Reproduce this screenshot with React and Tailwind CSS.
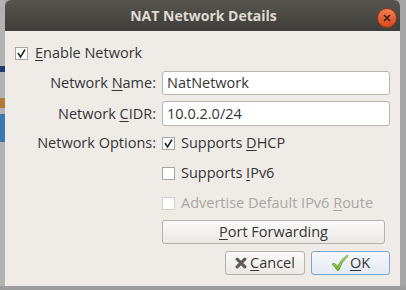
import React from "react";

const font = { fontFamily: '"Open Sans", "Noto Sans", sans-serif' };

const U = ({ children }) => <span className="underline underline-offset-2 decoration-1">{children}</span>;

const Check = ({ checked, disabled }) => (
  <div
    className={`w-[13px] h-[13px] shrink-0 border bg-white flex items-center justify-center ${
      disabled ? "border-[#d2d0cc] bg-[#f3f2f0]" : "border-[#a9a6a1]"
    }`}
  >
    {checked && (
      <svg width="11" height="11" viewBox="0 0 11 11">
        <path d="M2 5 L4.5 9 L9 1.5" fill="none" stroke="#2b2b2b" strokeWidth="1.6" />
      </svg>
    )}
  </div>
);

const Label = ({ children }) => (
  <div className="w-[142px] shrink-0 text-right pr-[1px]">{children}</div>
);

export default function App() {
  return (
    <div className="w-[406px] h-[290px] bg-[#a3a3a3] overflow-hidden flex flex-col text-[#353535]" style={font}>
      <div className="flex h-[286px]">
        {/* bits of the window behind */}
        <div className="w-[5px] shrink-0 flex flex-col bg-[#b3b3b3]">
          <div className="h-[66px]" />
          <div className="h-[6px] bg-[#1f3a6b]" />
          <div className="h-[26px]" />
          <div className="h-[10px] bg-[#b07a3a]" />
          <div className="h-[6px]" />
          <div className="h-[28px] bg-[#3a78b0]" />
        </div>

        <div className="w-[395px] shrink-0 flex flex-col">
          {/* title bar */}
          <div className="h-[31px] rounded-t-[6px] bg-gradient-to-b from-[#57554f] to-[#3f3e3a] flex items-center relative">
            <div className="flex-1 text-center text-[14px] font-bold text-[#dfdbd2] pl-[2px]">NAT Network Details</div>
            <div className="absolute right-[3px] top-[8px] w-[20px] h-[20px] rounded-full bg-gradient-to-b from-[#f27c4d] to-[#d9461a] border border-[#8a3a1c] flex items-center justify-center">
              <svg width="8" height="8" viewBox="0 0 8 8">
                <path d="M1 1 L7 7 M7 1 L1 7" stroke="#3a1a0e" strokeWidth="1.6" />
              </svg>
            </div>
          </div>

          {/* body */}
          <div className="flex-1 bg-[#efece8] pl-[10px] pr-[10px] pt-[12px] text-[14.5px]">
            <div className="h-[20px] flex items-center gap-[7px]">
              <Check checked />
              <span><U>E</U>nable Network</span>
            </div>

            <div className="mt-[8px] flex items-center gap-[5px]">
              <Label>Network <U>N</U>ame:</Label>
              <div className="w-[228px] h-[24px] bg-white border border-[#b9b5ae] rounded-[3px] flex items-center px-[4px]">
                NatNetwork
              </div>
            </div>

            <div className="mt-[6px] flex items-center gap-[5px]">
              <Label>Network <U>C</U>IDR:</Label>
              <div className="w-[228px] h-[25px] bg-white border border-[#b9b5ae] rounded-[3px] flex items-center px-[4px]">
                10.0.2.0/24
              </div>
            </div>

            <div className="mt-[2px] h-[30px] flex items-center gap-[5px]">
              <Label>Network Options:</Label>
              <div className="flex items-center gap-[6px]">
                <Check checked />
                <span>Supports <U>D</U>HCP</span>
              </div>
            </div>

            <div className="h-[30px] flex items-center gap-[5px]">
              <Label />
              <div className="flex items-center gap-[6px]">
                <Check />
                <span>Supports <U>I</U>Pv6</span>
              </div>
            </div>

            <div className="h-[30px] flex items-center gap-[5px]">
              <Label />
              <div className="flex items-center gap-[6px] text-[#a9a7a3]">
                <Check disabled />
                <span>Advertise Default IPv6 <U>R</U>oute</span>
              </div>
            </div>

            <div className="mt-[2px] flex gap-[5px]">
              <Label />
              <div className="w-[223px] h-[24px] rounded-[3px] border border-[#b5b1ab] bg-gradient-to-b from-[#fcfbfa] to-[#ebe9e5] flex items-center justify-center">
                <span><U>P</U>ort Forwarding</span>
              </div>
            </div>

            <div className="mt-[7px] flex justify-end gap-[6px]">
              <div className="w-[80px] h-[24px] rounded-[3px] border border-[#b5b1ab] bg-gradient-to-b from-[#fcfbfa] to-[#ebe9e5] flex items-center justify-center gap-[3px]">
                <svg width="12" height="12" viewBox="0 0 12 12">
                  <path d="M2.2 2.2 L9.8 9.8 M9.8 2.2 L2.2 9.8" stroke="#5d5d5b" strokeWidth="3.2" strokeLinecap="round" />
                </svg>
                <span><U>C</U>ancel</span>
              </div>
              <div className="w-[79px] h-[24px] rounded-[3px] border border-[#7fa6cf] bg-gradient-to-b from-[#f6f8fb] to-[#e3eaf2] flex items-center justify-center gap-[1px]">
                <svg width="18" height="18" viewBox="0 0 18 18">
                  <defs>
                    <linearGradient id="okg" x1="0" y1="0" x2="0" y2="1">
                      <stop offset="0" stopColor="#b8e07a" />
                      <stop offset="1" stopColor="#6fae2a" />
                    </linearGradient>
                  </defs>
                  <path d="M1 10 Q3 8.5 4.5 10 L6.5 12.5 Q10.5 4.5 16.5 1 Q17.3 1.5 16.8 2.2 Q11 7.5 7.8 16 Q7 17.3 6 16.3 Q3.5 12.5 1 10 Z" fill="url(#okg)" stroke="#5f9a26" strokeWidth="0.7" />
                </svg>
                <span><U>O</U>K</span>
              </div>
            </div>
          </div>
        </div>

        <div className="flex-1 bg-[#a5a5a5]" />
      </div>
      <div className="h-[4px] bg-[#9d9d9d]" />
    </div>
  );
}
